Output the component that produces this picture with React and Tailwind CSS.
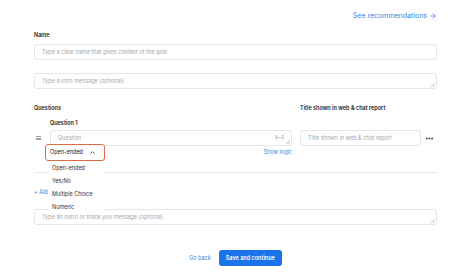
import { ChevronUp, ArrowRight, MoreHorizontal } from "lucide-react";

const font = { fontFamily: "Inter, 'Noto Sans', sans-serif" };

function Field({ placeholder, area, className = "" }) {
    return (
        <div className={`relative flex items-center h-[16px] border border-[#e3e5e8] rounded-[3px] bg-white px-[7px] ${className}`}>
            <span className="text-[5.5px] text-[#a3a7ad] whitespace-nowrap">{placeholder}</span>
            {area && (
                <svg className="absolute right-[1px] bottom-[1px]" width="4" height="4" viewBox="0 0 4 4">
                    <path d="M4 0L0 4M4 2L2 4" stroke="#9aa0a6" strokeWidth="0.6" />
                </svg>
            )}
        </div>
    );
}

export default function App() {
    const options = ["Open-ended", "Yes/No", "Multiple Choice", "Numeric"];

    return (
        <div className="w-[474px] h-[280px] bg-white pl-[34px] pr-[37px] pt-[11px] text-[#222]" style={font}>
            {/* top link */}
            <div className="flex justify-end">
                <span className="flex items-center gap-[2px] text-[7px] leading-[10px] text-[#3d7fe0]">
                    See recommendations
                    <ArrowRight className="w-[8px] h-[8px]" strokeWidth={2.2} />
                </span>
            </div>

            <div className="mt-[10px] text-[5.5px] font-semibold leading-[8px]">Name</div>
            <Field className="mt-[5px]" placeholder="Type a clear name that gives context of the goal" />
            <Field area className="mt-[13px]" placeholder="Type a intro message (optional)" />

            {/* questions */}
            <div className="flex mt-[15px] text-[5.5px] font-semibold leading-[8px]">
                <span className="w-[266px]">Questions</span>
                <span>Title shown in web &amp; chat report</span>
            </div>
            <div className="ml-[16px] mt-[7px] text-[5.5px] font-semibold leading-[8px]">Question 1</div>

            <div className="relative mt-[3px]">
                <div className="flex items-center">
                    <div className="w-[16px] flex flex-col gap-[1px] pl-[2px]">
                        <span className="block w-[5px] h-[0.7px] bg-[#9aa0a6]" />
                        <span className="block w-[5px] h-[0.7px] bg-[#9aa0a6]" />
                        <span className="block w-[5px] h-[0.7px] bg-[#9aa0a6]" />
                    </div>
                    <div className="relative w-[242px] h-[16px] border border-[#e3e5e8] rounded-[3px] flex items-center px-[7px] justify-between">
                        <span className="text-[5.5px] text-[#a3a7ad]">Question</span>
                        <span className="text-[5px] text-[#555]">{"{--}"}</span>
                        <svg className="absolute right-[1px] bottom-[1px]" width="4" height="4" viewBox="0 0 4 4">
                            <path d="M4 0L0 4M4 2L2 4" stroke="#9aa0a6" strokeWidth="0.6" />
                        </svg>
                    </div>
                    <div className="ml-[8px] w-[121px] h-[16px] border border-[#e3e5e8] rounded-[3px] flex items-center px-[7px]">
                        <span className="text-[5.5px] text-[#a3a7ad] whitespace-nowrap">Title shown in web &amp; chat report</span>
                    </div>
                    <MoreHorizontal className="ml-[4px] w-[9px] h-[9px] text-[#333]" strokeWidth={3} />
                </div>
                <div className="flex justify-end w-[258px] mt-[2px]">
                    <span className="text-[5.5px] leading-[8px] text-[#3d7fe0]">Show logic</span>
                </div>

                {/* type dropdown */}
                <div className="absolute left-[11px] top-[14px] z-10">
                    <div className="flex items-center gap-[6px] w-[60px] h-[17px] border border-[#e06a45] rounded-[3px] bg-white px-[4px]">
                        <span className="text-[5.5px] text-[#222]">Open-ended</span>
                        <ChevronUp className="w-[7px] h-[7px]" strokeWidth={2.5} />
                    </div>
                    <div className="ml-[3px] w-[56px] bg-white/90 flex flex-col py-[1px]">
                        {options.map((o) => (
                            <div key={o} className="h-[13px] flex items-center px-[4px] text-[5.5px] text-[#333]">
                                {o}
                            </div>
                        ))}
                    </div>
                </div>
            </div>

            <div className="mt-[16px] h-[1px] bg-[#e8eaed]" />
            <div className="mt-[15px] text-[5.5px] leading-[8px] text-[#3d7fe0]">+ Add</div>
            <Field area className="mt-[13px]" placeholder="Type an outro or thank you message (optional)" />

            {/* footer */}
            <div className="flex items-center justify-center gap-[8px] mt-[25px]">
                <span className="text-[5.5px] text-[#3d7fe0]">Go back</span>
                <button className="h-[16px] px-[7px] rounded-[3px] bg-[#1a73e8] text-white text-[5.5px] font-semibold">
                    Save and continue
                </button>
            </div>
        </div>
    );
}
